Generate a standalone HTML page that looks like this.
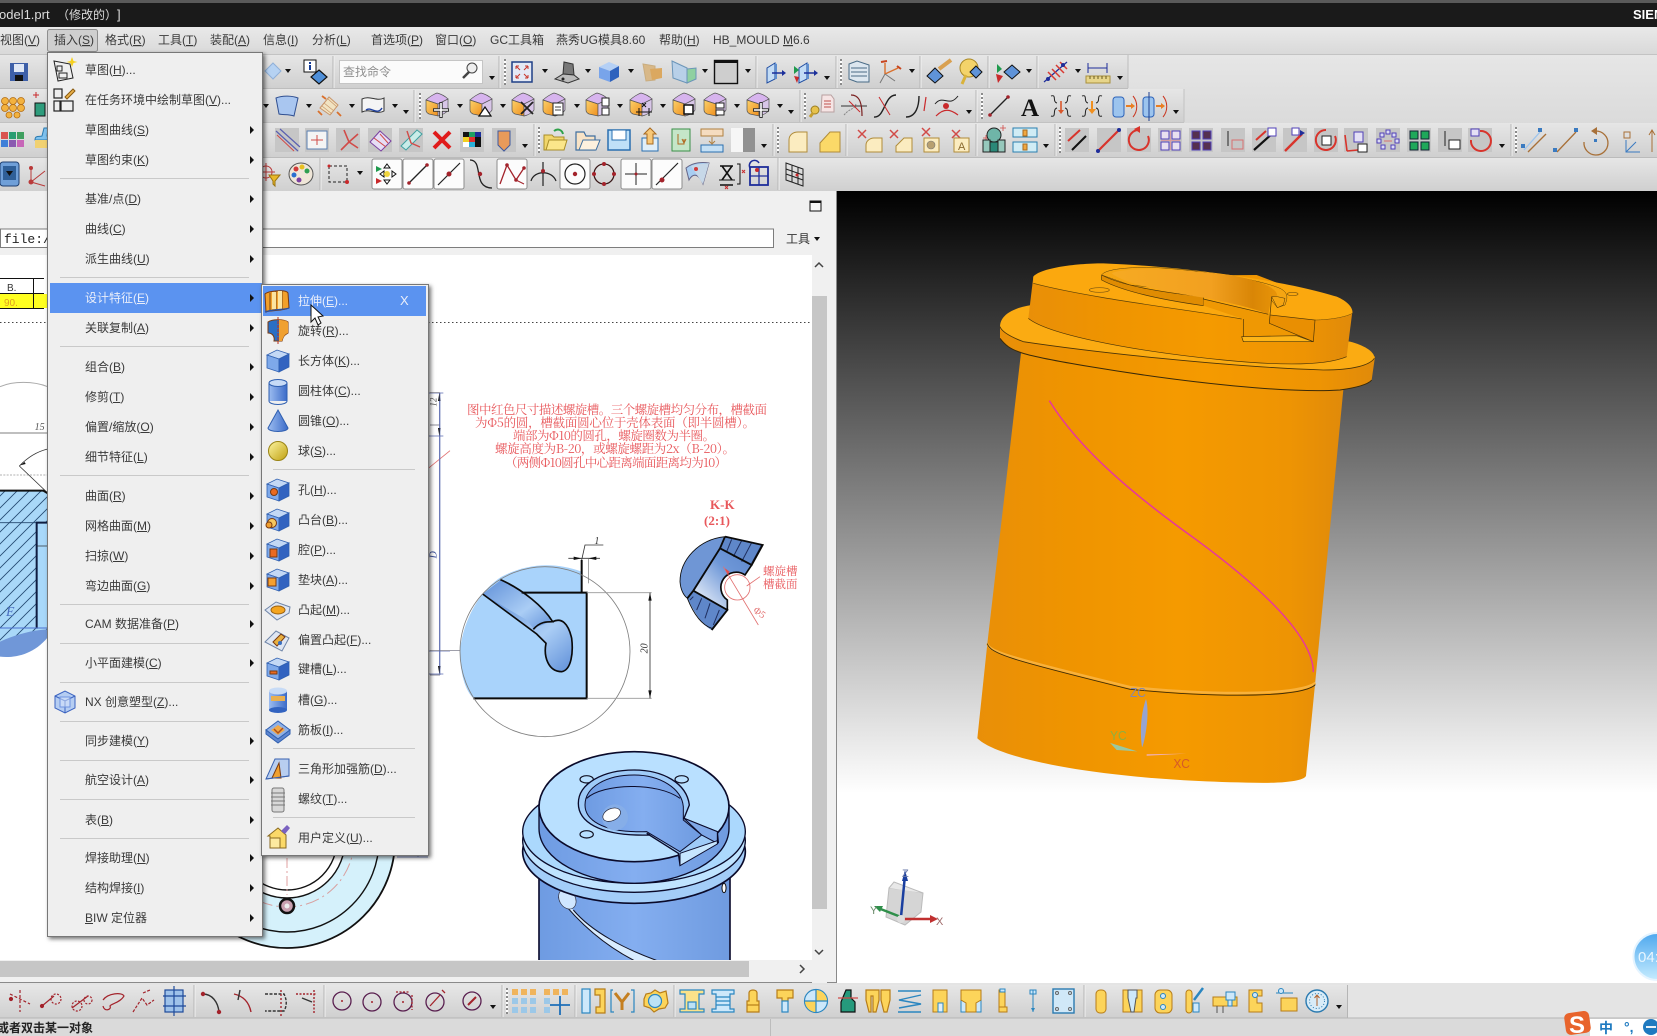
<!DOCTYPE html>
<html lang="zh"><head><meta charset="utf-8"><title>NX</title>
<style>
html,body{margin:0;padding:0;background:#ddd}
html{overflow:hidden}
body{width:1657px;height:1036px;position:relative;overflow:hidden;font-family:"Liberation Sans","Noto Sans CJK SC",sans-serif;font-size:12px;color:#3a3a3a;filter:blur(.3px)}
svg{position:absolute;left:0;top:0;display:block}
svg text{font-family:"Liberation Sans","Noto Sans CJK SC",sans-serif}
.m{position:absolute;background:#efefef;border:1px solid #777;box-shadow:2px 2px 4px rgba(0,0,0,.55);box-sizing:border-box}
.i{position:absolute;height:30px;line-height:30px;white-space:nowrap}
.s{position:absolute;height:1px;background:#c9c9c9}
.h{position:absolute;background:#5b93f0}
.r{position:absolute;width:0;height:0;border-left:4px solid #111;border-top:4px solid transparent;border-bottom:4px solid transparent}
.t{position:absolute;white-space:nowrap;line-height:16px}
</style></head><body>
<svg width="1657" height="1036" viewBox="0 0 1657 1036">
<defs>
<linearGradient id="tb" x1="0" y1="0" x2="0" y2="1"><stop offset="0" stop-color="#e6e6e6"/><stop offset="1" stop-color="#cfcfcf"/></linearGradient>
<linearGradient id="tb2" x1="0" y1="0" x2="0" y2="1"><stop offset="0" stop-color="#e9e9e9"/><stop offset="1" stop-color="#d8d8d8"/></linearGradient>
<linearGradient id="vp" x1="0" y1="0" x2="0" y2="1"><stop offset="0" stop-color="#000"/><stop offset=".76" stop-color="#fff"/><stop offset="1" stop-color="#fff"/></linearGradient>
<linearGradient id="org" x1="0" y1="0" x2="1" y2="0"><stop offset="0" stop-color="#e98f08"/><stop offset=".25" stop-color="#ef9400"/><stop offset=".55" stop-color="#f59a00"/><stop offset=".85" stop-color="#ee9403"/><stop offset="1" stop-color="#e08a0a"/></linearGradient>
<linearGradient id="hg" x1="0" y1="0" x2="1" y2="0"><stop offset="0" stop-color="#f6aa22"/><stop offset=".6" stop-color="#f2a020"/><stop offset=".85" stop-color="#d98606"/><stop offset="1" stop-color="#e89408"/></linearGradient>
<linearGradient id="bl" x1="0" y1="0" x2="1" y2="0"><stop offset="0" stop-color="#6e9be2"/><stop offset=".5" stop-color="#84aef0"/><stop offset="1" stop-color="#6f9be0"/></linearGradient>
<linearGradient id="blg" x1="0" y1="0" x2="1" y2="1"><stop offset="0" stop-color="#5f8fd8"/><stop offset=".6" stop-color="#aacdf5"/><stop offset="1" stop-color="#5f8fd8"/></linearGradient>
<linearGradient id="kk" x1="0" y1="1" x2="1" y2="0"><stop offset="0" stop-color="#fff"/><stop offset=".6" stop-color="#6f98d8"/><stop offset="1" stop-color="#5d87cc"/></linearGradient>
<linearGradient id="tm" x1="0" y1="0" x2="0" y2="1"><stop offset="0" stop-color="#4ea8ee"/><stop offset="1" stop-color="#c5ecff"/></linearGradient>
<linearGradient id="ocl" x1="0" y1="0" x2="1" y2="1"><stop offset="0" stop-color="#fbd16a"/><stop offset="1" stop-color="#ef8f1e"/></linearGradient>
<pattern id="ht" width="36" height="36" patternUnits="userSpaceOnUse"><rect width="36" height="36" fill="#a9d8f8"/><path d="M-2,38L38,-2M-2,2L2,-2M34,38L38,34" stroke="#244a72" stroke-width="2.500"/></pattern>
<clipPath id="docc"><rect x="0" y="255" width="812" height="705"/></clipPath>
<g id="a"><path d="M-3,-2h6l-3,4z" fill="#111"/></g>
<g id="gp"><path d="M0,-13V13" stroke="#fff" stroke-width="2.400"/><path d="M0,-13V13" stroke="#8a8a8a" stroke-width="2" stroke-dasharray="2 2"/></g>
<g id="sp"><path d="M0,-16V16" stroke="#b5b5b5"/><path d="M1,-16V16" stroke="#f2f2f2"/></g>
<g id="cb"><path d="M-10,-5L0,-10 10,-6 1,-1Z" fill="#b5d0f5"/><path d="M-10,-5L1,-1V10L-10,6Z" fill="#78a4ea"/><path d="M1,-1L10,-6V5L1,10Z" fill="#2e62bd"/></g>
<g id="oc"><path d="M-11,-5C-8,-8 -3,-11 0,-12 4,-11 8,-9 11,-6 8,-3 4,-2 1,-1Z" fill="#d7b4ee" stroke="#555" stroke-width=".7"/><path d="M-11,-5L1,-1V11L-8,9C-10,8 -11,7 -11,5Z" fill="url(#ocl)" stroke="#555" stroke-width=".7"/><path d="M1,-1L11,-6V5C10,7 6,10 1,11Z" fill="#d8c6e8" stroke="#555" stroke-width=".7"/></g>
<g id="bx"><rect x="-15" y="-15" width="30" height="30" rx="2" fill="#fcfcfc" stroke="#8d8d8d"/></g>
<g id="gb"><rect x="-12" y="-12" width="24" height="24" fill="#c6c6c6"/></g>
<g id="ln"><path d="M-9,9L9,-9" stroke="#222" stroke-width="1.300"/><circle cx="9" cy="-9" r="1.800" fill="#a3232b"/><circle cx="-9" cy="9" r="1.800" fill="#a3232b"/></g>
</defs>

<!-- shell -->
<rect width="1657" height="1036" fill="#dcdcdc"/>
<rect width="1657" height="3" fill="#5a5a5a"/>
<rect y="3" width="1657" height="24" fill="#1a1a1a"/>
<text x="-1" y="19" font-size="13" fill="#dcdcdc">odel1.prt</text>
<text x="57" y="19" font-size="12" fill="#dcdcdc">（修改的）</text>
<text x="117" y="19" font-size="13" fill="#dcdcdc">]</text>
<text x="1633" y="19" font-size="13" font-weight="700" fill="#fff">SIEMENS</text>
<rect y="27" width="1657" height="28" fill="url(#tb2)"/>
<path d="M0,54.500H1657" stroke="#c3c3c3"/>
<rect y="55" width="1657" height="136" fill="url(#tb)"/>
<rect y="55" x="0" width="1128" height="33" fill="url(#tb)"/>
<path d="M0,88.500H1128M1128,55V88" stroke="#bdbdbd" fill="none"/>
<rect y="89" x="0" width="1184" height="33" fill="url(#tb)"/>
<path d="M0,122.500H1184M1184,89V122" stroke="#c2c2c2" fill="none"/>
<rect y="123" width="1657" height="34" fill="url(#tb)"/>
<path d="M0,157.500H1657" stroke="#bbb"/>
<rect y="158" width="1657" height="33" fill="url(#tb)"/>

<!-- menubar text -->
<g font-size="12" fill="#3a3a3a">
<rect x="47.500" y="29.500" width="50" height="22" fill="#cfcfcf" stroke="#8f8f8f" rx="2"/>
<text x="0" y="44">视图(<tspan text-decoration="underline">V</tspan>)</text>
<text x="54" y="44">插入(<tspan text-decoration="underline">S</tspan>)</text>
<text x="105" y="44">格式(<tspan text-decoration="underline">R</tspan>)</text>
<text x="158" y="44">工具(<tspan text-decoration="underline">T</tspan>)</text>
<text x="210" y="44">装配(<tspan text-decoration="underline">A</tspan>)</text>
<text x="263" y="44">信息(<tspan text-decoration="underline">I</tspan>)</text>
<text x="312" y="44">分析(<tspan text-decoration="underline">L</tspan>)</text>
<text x="371" y="44">首选项(<tspan text-decoration="underline">P</tspan>)</text>
<text x="435" y="44">窗口(<tspan text-decoration="underline">O</tspan>)</text>
<text x="490" y="44">GC工具箱</text>
<text x="556" y="44">燕秀UG模具8.60</text>
<text x="659" y="44">帮助(<tspan text-decoration="underline">H</tspan>)</text>
<text x="713" y="44">HB_MOULD <tspan text-decoration="underline">M</tspan>6.6</text>
</g>

<!-- ROW 1 -->
<g>
<g transform="translate(19,72)"><rect x="-9" y="-9" width="18" height="18" fill="#3d5fa8"/><rect x="-5" y="-8" width="10" height="8" fill="#dfe7f5"/><rect x="-4" y="3" width="8" height="6" fill="#111"/></g>
<g transform="translate(270,71)"><path d="M3,-8L11,0 3,8 -5,0Z" fill="#b6d2f2" stroke="#8fb0d8"/></g>
<use href="#a" x="288" y="71"/>
<g transform="translate(314,71)"><rect x="-10" y="-11" width="12" height="12" fill="#fff" stroke="#111"/><rect x="-5" y="-9" width="2" height="2" fill="#123a96"/><rect x="-5" y="-6" width="2" height="5" fill="#123a96"/><path d="M5,-1L13,6 5,13 -3,6Z" fill="#4f8fd8" stroke="#111" stroke-width="1.200"/></g>
<use href="#sp" x="333" y="72"/>
<rect x="339.500" y="60.500" width="143" height="23" fill="#fbfbfb" stroke="#c5c5c5"/>
<text x="343" y="76" font-size="12" fill="#8f8f8f">查找命令</text>
<g transform="translate(470,71)" fill="none" stroke="#444"><circle cx="2" cy="-3" r="5" fill="#eee"/><path d="M-1,1L-7,7" stroke-width="2.500"/></g>
<use href="#a" x="492" y="78"/><use href="#sp" x="499" y="72"/><use href="#gp" x="505" y="72"/>
<g transform="translate(522,72)"><rect x="-10" y="-10" width="20" height="20" fill="#e4e9f5" stroke="#1f3f86" stroke-width="1.500"/><path d="M-6,-6L-2,-2M-6,-6h3M-6,-6v3M6,-6L2,-2M6,-6h-3M6,-6v3M-6,6L-2,2M-6,6h3M-6,6v-3M6,6L2,2M6,6h-3M6,6v-3" stroke="#c9352b" fill="none"/></g>
<use href="#a" x="545" y="71"/>
<g transform="translate(566,72)"><path d="M-2,-10L7,-8 8,3 -3,2Z" fill="#777" stroke="#333"/><path d="M-3,2L8,3 13,7 2,11 -11,7Z" fill="#bbb" stroke="#333"/><circle cx="-3" cy="7" r="1.500" fill="#222"/></g>
<use href="#a" x="588" y="71"/><use href="#cb" x="609" y="72"/><use href="#a" x="631" y="71"/>
<g transform="translate(652,72)"><path d="M-9,-8L3,-6V8L-6,9Z" fill="#d8b888" stroke="#c9ad80"/><path d="M-2,-3L10,-4V6L0,8Z" fill="#dba860"/></g>
<g transform="translate(683,72)"><path d="M-11,-11L4,-4V11L-10,6Z" fill="#b8d0e8" stroke="#6b95b8"/><path d="M4,-3L13,-4V7L4,11Z" fill="#8fd0a0" stroke="#6b95b8"/></g>
<use href="#a" x="705" y="71"/>
<g transform="translate(726,72)"><rect x="-11.500" y="-11.500" width="23" height="23" fill="#cecece" stroke="#111" stroke-width="1.400"/><rect x="-12" y="-12" width="24" height="3" fill="#111"/></g>
<use href="#a" x="748" y="71"/><use href="#sp" x="756" y="72"/>
<g transform="translate(774,73)"><path d="M-7,-5L1,-10V6L-7,10Z" fill="#c3dcf5" stroke="#1e4ba0"/><path d="M1,-10L3,-9V6L1,6Z" fill="#5f8fd0"/><path d="M-2,0H8" stroke="#1b2f9a" stroke-width="1.500"/><path d="M8,-3L12,0 8,3Z" fill="#1b2f9a"/></g>
<g transform="translate(806,73)"><path d="M-7,-5L1,-10V6L-7,10Z" fill="#c3dcf5" stroke="#1e4ba0"/><path d="M1,-10L3,-9V6L1,6Z" fill="#5f8fd0"/><path d="M-2,0H8" stroke="#1b2f9a" stroke-width="1.500"/><path d="M8,-3L12,0 8,3Z" fill="#1b2f9a"/><path d="M-12,-7L-7,-3 -12,1Z" fill="#1f9a4d"/><path d="M-12,3L-7,4 -9,10Z" fill="#c9292b"/></g>
<use href="#a" x="827" y="78"/><use href="#sp" x="836" y="72"/><use href="#gp" x="841" y="72"/>
<g transform="translate(859,72)" fill="#dce6ef" stroke="#4a6b86"><path d="M-10,-8L-2,-11 10,-7V10L-2,10 -10,7Z"/><path d="M-8,-4H8M-8,0H8M-8,4H8" fill="none"/></g>
<g transform="translate(889,72)" fill="none"><path d="M-4,2L9,-4M-4,2V-9" stroke="#d9702c" stroke-width="1.400"/><path d="M-4,2L-9,11 M-4,2L6,9" stroke="#777"/><path d="M-8,-10L-2,-11M8,-6L12,-3" stroke="#c8441e" stroke-width="2"/></g>
<use href="#a" x="912" y="71"/><use href="#sp" x="920" y="72"/>
<g transform="translate(939,72)"><path d="M-4,2L4,10 -4,17 -12,10Z" transform="translate(0,-6)" fill="#5f93d8" stroke="#111"/><path d="M0,-3L12,-12" stroke="#d9a050" stroke-width="4"/></g>
<g transform="translate(970,72)"><circle cx="-1" cy="-4" r="9" fill="#f3d36a" stroke="#a98825"/><path d="M-4,3L-8,12" stroke="#d9b23a" stroke-width="3"/><path d="M6,-6L12,0 6,6 0,0Z" fill="#5f93d8" stroke="#111"/></g>
<use href="#sp" x="988" y="72"/>
<g transform="translate(1006,72)"><path d="M-9,-8L-4,-3 -9,1Z" fill="#1f9a4d"/><path d="M-10,2L-3,4 -8,11Z" fill="#c9292b"/><path d="M6,-7L14,0 6,7 -2,0Z" fill="#5f93d8" stroke="#111"/></g>
<use href="#a" x="1029" y="71"/><use href="#sp" x="1037" y="72"/>
<g transform="translate(1056,72)"><path d="M-12,10L11,-10" stroke="#1e2d9a" stroke-width="1.200"/><path d="M-8,0L0,8M-4,-3L4,5M0,-7L8,1M4,-10L11,-3" stroke="#d93a32" stroke-width="1.500"/><circle cx="-8" cy="7" r="2" fill="#1e2d9a"/><circle cx="7" cy="-7" r="2" fill="#1e2d9a"/></g>
<use href="#a" x="1078" y="71"/>
<g transform="translate(1098,72)"><path d="M-10,-4H9M-10,-9V1M9,-9V1" stroke="#1e2d9a"/><rect x="-12" y="4" width="24" height="7" fill="#e7d58a" stroke="#a8903c"/><path d="M-8,4v3M-4,4v3M0,4v3M4,4v3M8,4v3" stroke="#6a5a20"/></g>
<use href="#a" x="1120" y="78"/>
</g>

<!-- ROW 2 -->
<g>
<g transform="translate(13,106)" fill="#f3b23f" stroke="#b36d14" stroke-width=".8"><circle cx="-8" cy="-5" r="3.500"/><circle cx="0" cy="-5" r="3.500"/><circle cx="8" cy="-5" r="3.500"/><circle cx="-8" cy="2" r="3.500"/><circle cx="0" cy="2" r="3.500"/><circle cx="8" cy="2" r="3.500"/><circle cx="-4" cy="9" r="3"/><circle cx="4" cy="9" r="3"/></g>
<g transform="translate(41,106)"><path d="M-6,10V-3H4V10Z" fill="#2e9c7c" stroke="#111"/><path d="M-8,-11H-2M-5,-14V-8" stroke="#c9292b"/></g>
<use href="#a" x="266" y="106"/>
<g transform="translate(287,106)"><path d="M-11,-8C-4,-11 6,-10 11,-8L7,10C2,8 -4,9 -8,8Z" fill="#a9c6f0" stroke="#304f90"/></g>
<use href="#a" x="309" y="106"/>
<g transform="translate(329,106)"><path d="M-9,2L0,-9 9,-1 1,9Z" fill="#f1e3c2" stroke="#c8956a" stroke-width="1"/><path d="M-5,-3L5,5M-1,-7L8,1M-7,0L3,8" stroke="#c8956a" stroke-width=".7"/><path d="M-7,-10L-3,-7M8,6L12,10M-11,5L-7,9" stroke="#d9702c" stroke-width="1.800"/></g>
<use href="#a" x="352" y="106"/>
<g transform="translate(373,106)"><path d="M-11,-7C-3,-11 4,-4 11,-8V5C4,9 -3,2 -11,6Z" fill="#f5f5f5" stroke="#333"/><path d="M-7,4C-2,0 4,10 9,2" stroke="#1e3fa0" fill="none" stroke-width="1.400"/></g>
<use href="#a" x="395" y="106"/><use href="#a" x="406" y="112"/>
<use href="#sp" x="414" y="106"/><use href="#gp" x="420" y="106"/>
<use href="#oc" x="437" y="105"/><g transform="translate(441,110)"><path d="M0,-8V8M-8,0H8" stroke="#333" stroke-width="3.400"/><path d="M0,-7V7M-7,0H7" stroke="#fff" stroke-width="1.600"/></g>
<use href="#a" x="460" y="106"/>
<use href="#oc" x="481" y="105"/><path d="M485,107l6,9h-12z" fill="#fff" stroke="#111" stroke-width="1.200"/>
<use href="#a" x="503" y="106"/>
<use href="#oc" x="523" y="105"/><path d="M521,102l12,12M533,102l-12,12" stroke="#222" stroke-width="1.800"/>
<use href="#oc" x="554" y="105"/><rect x="553" y="103" width="10" height="12" fill="#fff" stroke="#222"/><path d="M555,107h6M555,110h6" stroke="#444"/>
<use href="#a" x="577" y="106"/>
<use href="#oc" x="597" y="105"/><rect x="602" y="98" width="7" height="8" fill="#fff" stroke="#222"/><rect x="602" y="108" width="7" height="7" fill="#fff" stroke="#222"/>
<use href="#a" x="620" y="106"/>
<use href="#oc" x="641" y="105"/><path d="M636,112h16M639,108v8M649,108v8" stroke="#111"/><path d="M642,103l4,4m0-4l-4,4" stroke="#111"/>
<use href="#a" x="663" y="106"/>
<use href="#oc" x="684" y="105"/><rect x="684" y="105" width="9" height="9" fill="#fff" stroke="#111" stroke-width="1.500"/>
<use href="#oc" x="715" y="105"/><rect x="716" y="103" width="8" height="5" fill="#fff" stroke="#222"/><rect x="716" y="110" width="8" height="5" fill="#fff" stroke="#222"/>
<use href="#a" x="737" y="106"/>
<use href="#oc" x="758" y="105"/><g transform="translate(761,110)"><path d="M0,-8V8M-8,0H8" stroke="#333" stroke-width="3.400"/><path d="M0,-7V7M-7,0H7" stroke="#fff" stroke-width="1.600"/></g>
<use href="#a" x="780" y="106"/><use href="#a" x="791" y="112"/>
<use href="#sp" x="800" y="106"/><use href="#gp" x="805" y="106"/>
<g transform="translate(822,106)"><path d="M0,-11H9L12,-7V6H-1Z" fill="#f6e4e4" stroke="#b8a0a0"/><path d="M2,-5H9M2,-2H9M2,1H9" stroke="#c0504d"/><circle cx="-7" cy="4" r="4" fill="#e7c24b" stroke="#9a7d22"/><path d="M-9,7L-12,11" stroke="#c69f2e" stroke-width="3"/></g>
<g transform="translate(854,106)" fill="none"><path d="M-13,0H13" stroke="#333"/><path d="M-3,-11C4,-11 8,-6 8,10" stroke="#7a1f1f" stroke-width="1.200"/><path d="M-10,9C-4,2 0,4 2,-2" stroke="#888" stroke-dasharray="2 1"/><path d="M-5,-5L6,6" stroke="#c9292b"/></g>
<g transform="translate(885,106)" fill="none"><path d="M-11,11C0,12 -1,-11 11,-11" stroke="#222" stroke-width="1.400"/><path d="M-6,-9L5,9" stroke="#c9292b"/></g>
<g transform="translate(917,106)" fill="none"><path d="M-11,11C-1,11 2,0 2,-10" stroke="#222" stroke-width="1.400"/><path d="M9,-9L7,5" stroke="#c9292b" stroke-width="1.200"/></g>
<g transform="translate(947,106)" fill="none"><path d="M-12,-2C-4,-12 2,2 11,-10" stroke="#222"/><path d="M-11,10C-3,2 3,3 11,9" stroke="#c9292b" stroke-width="1.200"/><circle cx="-1" cy="0" r="3" fill="#c9292b"/></g>
<use href="#a" x="969" y="112"/><use href="#sp" x="976" y="106"/><use href="#gp" x="982" y="106"/>
<use href="#ln" x="999" y="106"/>
<text x="1021" y="116" font-weight="700" font-size="25" fill="#111" style="font-family:'Liberation Serif'">A</text>
<g transform="translate(1061,106)" fill="none"><path d="M-10,-10C-4,-12 -9,-4 -4,-3M-10,10C-4,12 -9,3 -4,2M10,-10C4,-12 9,-4 4,-3M10,10C4,12 9,3 4,2" stroke="#222"/><path d="M0,-5V6" stroke="#d9572b" stroke-width="1.600"/><path d="M-3,4L0,8 3,4Z" fill="#d9572b"/></g>
<g transform="translate(1092,106)" fill="none"><path d="M-10,-10C-4,-12 -9,-4 -4,-3M-10,10C-4,12 -9,3 -4,2M10,-10C4,-12 9,-4 4,-3M10,10C4,12 9,3 4,2" stroke="#222"/><path d="M0,-5V4" stroke="#f09020" stroke-width="2"/><path d="M-4,3L0,8 4,3Z" fill="#f09020"/></g>
<g transform="translate(1123,106)"><rect x="-10" y="-9" width="11" height="20" rx="3" fill="#9cc4ee" stroke="#2c62b8"/><path d="M3,0H9" stroke="#ea7d21" stroke-width="2"/><path d="M8,-3L12,0 8,3Z" fill="#ea7d21"/><path d="M10,-10C15,-4 15,5 10,11" stroke="#c9351e" fill="none"/></g>
<g transform="translate(1153,106)"><rect x="-10" y="-9" width="11" height="20" rx="3" fill="#9cc4ee" stroke="#2c62b8"/><path d="M-4,-14V15" stroke="#1e3f90"/><path d="M3,0H9" stroke="#ea7d21" stroke-width="2"/><path d="M8,-3L12,0 8,3Z" fill="#ea7d21"/><path d="M10,-10C15,-4 15,5 10,11" stroke="#c9351e" fill="none"/></g>
<use href="#a" x="1176" y="112"/>
</g>

<!-- ROW 3 -->
<g>
<g transform="translate(13,140)"><rect x="-12" y="-8" width="7" height="7" fill="#d9534f"/><rect x="-4" y="-8" width="7" height="7" fill="#2a9d72"/><rect x="4" y="-8" width="7" height="7" fill="#3f9f5f"/><rect x="-12" y="0" width="7" height="7" fill="#3f7fd8"/><rect x="-4" y="0" width="7" height="7" fill="#8a5ab0"/><rect x="4" y="0" width="7" height="7" fill="#c766b8"/></g>
<g transform="translate(43,140)"><path d="M-8,0C-8,-5 -4,-3 -1,-4L1,-12H5L4,-4C7,-3 9,-3 9,0Z" fill="#7fc2ee" stroke="#2a7ab0"/><rect x="-8" y="0" width="16" height="8" fill="#f1d172"/></g>
<use href="#gb" x="287" y="140"/><path d="M276,131L298,151M280,129L300,147" stroke="#5a5fb0" stroke-width="1.200"/><path d="M277,135L294,151" stroke="#d14b48"/>
<use href="#gb" x="317" y="140"/><rect x="307" y="131" width="20" height="18" fill="#f4f4f4" stroke="#5a7fb0"/><path d="M317,135v10M311,140h12" stroke="#d14b48"/>
<use href="#gb" x="348" y="140"/><path d="M344,130L349,142 358,134M349,142L341,150M349,142L358,148" stroke="#d14b48" stroke-width="1.600" fill="none"/>
<use href="#gb" x="380" y="140"/><path d="M370,142L380,131 391,141 381,151Z" fill="#e6ddf5" stroke="#7a3fa0"/><path d="M374,138L386,147M380,134L388,143" stroke="#d14b48"/>
<use href="#gb" x="411" y="140"/><path d="M401,146L417,130 422,134 406,150Z" fill="#c9ece8" stroke="#3fa0a0"/><path d="M407,131L411,143 420,147" stroke="#d14b48" fill="none" stroke-width="1.400"/>
<path d="M434,132L450,148M450,132L434,148" stroke="#e01b1b" stroke-width="4"/>
<use href="#gb" x="472" y="140"/><g transform="translate(463,132)"><rect width="6" height="5" fill="#111"/><rect x="6" width="6" height="5" fill="#1fa060"/><rect x="12" width="6" height="5" fill="#1b2f9a"/><rect y="5" width="6" height="5" fill="#f0d020"/><rect x="6" y="5" width="6" height="5" fill="#e03030"/><rect x="12" y="5" width="6" height="5" fill="#111"/><rect y="10" width="6" height="5" fill="#fff"/><rect x="6" y="10" width="6" height="5" fill="#2ab0d8"/><rect x="12" y="10" width="6" height="5" fill="#111"/></g>
<use href="#gb" x="504" y="140"/><path d="M498,131H510V145L504,151 498,145Z" fill="#e89a5a" stroke="#3f5aa0"/>
<use href="#a" x="525" y="146"/><use href="#sp" x="534" y="140"/><use href="#gp" x="539" y="140"/>
<g transform="translate(554,140)"><path d="M-10,-5H-2L0,-3H10V10H-10Z" fill="#f1d66b" stroke="#a98d28"/><path d="M-8,10L-5,0H13L10,10Z" fill="#fbe68a" stroke="#a98d28"/><path d="M0,-9C4,-12 8,-10 9,-6" stroke="#2fa14a" stroke-width="2" fill="none"/></g>
<g transform="translate(587,140)"><path d="M-11,-8H-3L-1,-4H8V10H-11Z" fill="#f8e3c6" stroke="#3f6fa0" stroke-width="1.200"/><path d="M-8,10L-4,0H13L9,10Z" fill="#fdf1de" stroke="#3f6fa0"/></g>
<g transform="translate(619,140)"><rect x="-11" y="-10" width="22" height="20" fill="#bfe0f8" stroke="#2a6fb0" stroke-width="1.500"/><rect x="-7" y="-10" width="14" height="10" fill="#fff" stroke="#2a6fb0"/></g>
<g transform="translate(650,140)"><path d="M-8,-2H8V11H-8Z" fill="#e0eef8" stroke="#2a6fb0"/><path d="M-3,4V-6H-6L0,-12 6,-6H3V4Z" fill="#f8c878" stroke="#a86a20"/></g>
<g transform="translate(681,140)"><rect x="-9" y="-11" width="18" height="22" fill="#c5e6c8" stroke="#3a8f48"/><path d="M-3,-6V4H3V-1" stroke="#b06a20" fill="none"/><path d="M1,-1L3,3 5,-1" stroke="#b06a20" fill="none"/></g>
<g transform="translate(712,140)"><rect x="-11" y="-11" width="22" height="7" fill="#f5dcc0" stroke="#b08040"/><rect x="-11" y="5" width="22" height="7" fill="#c5e0f5" stroke="#2a6fb0"/><path d="M0,-3V3M-3,1L0,4 3,1" stroke="#b08040" fill="none"/></g>
<rect x="731" y="128" width="12" height="24" fill="#f6f6f6"/><rect x="743" y="128" width="12" height="24" fill="#919191"/>
<use href="#a" x="764" y="146"/><use href="#sp" x="773" y="140"/><use href="#gp" x="778" y="140"/>
<path d="M789,152V140C789,135 793,132 798,132H807V152Z" fill="#fbecc0" stroke="#b08c3a"/>
<path d="M820,152V143L830,132H840V152Z" fill="#fbd968" stroke="#b08c3a"/>
<use href="#sp" x="846" y="140"/>
<g stroke-width="1.500"><path d="M858,130L866,138M866,130L858,138" stroke="#d14b48"/><path d="M866,152V145C866,141 870,138 874,138H882V152Z" fill="#fbecc0" stroke="#b08c3a" stroke-width="1"/>
<path d="M890,130L898,138M898,130L890,138" stroke="#d14b48"/><path d="M896,152V146L904,138H912V152Z" fill="#fbecc0" stroke="#b08c3a" stroke-width="1"/>
<path d="M922,128L930,136M930,128L922,136" stroke="#d14b48"/><rect x="924" y="138" width="15" height="14" fill="#fbecc0" stroke="#b08c3a" stroke-width="1"/><circle cx="931" cy="145" r="4" fill="#b8a070" stroke="#777" stroke-width=".6"/>
<path d="M952,130L960,138M960,130L952,138" stroke="#d14b48"/><rect x="954" y="138" width="15" height="14" fill="#fbecc0" stroke="#b08c3a" stroke-width="1"/></g>
<text x="958" y="150" font-size="11" fill="#8a6a30">A</text>
<use href="#sp" x="976" y="140"/>
<g transform="translate(994,140)"><path d="M-11,-2h6M-8,-5v6M6,-12h6M9,-15v6" stroke="#d14b48" stroke-width=".8"/><circle cx="0" cy="-5" r="7" fill="#6fb5a8" stroke="#222"/><rect x="-11" y="0" width="7" height="12" fill="#96c8bc" stroke="#222"/><rect x="4" y="0" width="7" height="12" fill="#96c8bc" stroke="#222"/><rect x="-4" y="2" width="8" height="10" fill="#2a8878" stroke="#222"/></g>
<g transform="translate(1025,140)"><rect x="-12" y="-12" width="24" height="9" fill="#d0ecf5" stroke="#2a7fb0"/><rect x="-12" y="2" width="24" height="10" fill="#d0ecf5" stroke="#2a7fb0"/><rect x="-2" y="-10" width="4" height="6" fill="#f0a840" stroke="#a86a20"/><rect x="-2" y="4" width="4" height="6" fill="#f0a840" stroke="#a86a20"/></g>
<use href="#a" x="1046" y="146"/><use href="#sp" x="1055" y="140"/><use href="#gp" x="1060" y="140"/>
<use href="#gb" x="1077" y="140"/><path d="M1068,141L1080,130" stroke="#d8342c" stroke-width="2"/><path d="M1072,150L1086,136" stroke="#111" stroke-width="2"/>
<use href="#gb" x="1109" y="140"/><path d="M1098,151L1118,131" stroke="#d8342c" stroke-width="2.200"/><circle cx="1119" cy="130" r="2" fill="#1e2d9a"/><circle cx="1098" cy="151" r="2" fill="#1e2d9a"/>
<use href="#gb" x="1139" y="140"/><path d="M1139,130A10,10 0 1 0 1148,136" fill="none" stroke="#d8342c" stroke-width="2"/><path d="M1134,129L1140,126V133Z" fill="#d8342c"/>
<use href="#gb" x="1170" y="140"/><g fill="#e8e0f0" stroke="#5040b8"><rect x="1161" y="131" width="8" height="8"/><rect x="1172" y="131" width="8" height="8"/><rect x="1161" y="142" width="8" height="8"/><rect x="1172" y="142" width="8" height="8"/></g><path d="M1161,140.500h19M1170.500,131v19" stroke="#d8a0a0"/>
<use href="#gb" x="1201" y="140"/><g fill="#55304f" stroke="#5040b8"><rect x="1192" y="131" width="8" height="8"/><rect x="1203" y="131" width="8" height="8"/><rect x="1192" y="142" width="8" height="8"/><rect x="1203" y="142" width="8" height="8"/></g>
<use href="#gb" x="1233" y="140"/><path d="M1228,131V146" stroke="#222"/><rect x="1232" y="140" width="11" height="9" fill="none" stroke="#d87070"/>
<use href="#gb" x="1264" y="140"/><path d="M1254,150L1274,132" stroke="#111" stroke-width="2.200"/><path d="M1256,140L1266,131" stroke="#d8342c" stroke-width="2"/><rect x="1268" y="128" width="8" height="8" fill="#fff" stroke="#5040b8"/>
<use href="#gb" x="1295" y="140"/><path d="M1285,151L1302,134" stroke="#d8342c" stroke-width="2.400"/><rect x="1292" y="128" width="7" height="7" fill="#fff" stroke="#5040b8"/><path d="M1300,130l5,3-5,3z" fill="#1e2d9a"/>
<use href="#gb" x="1326" y="140"/><path d="M1326,130A10,10 0 1 0 1335,136" fill="none" stroke="#d8342c" stroke-width="2"/><rect x="1322" y="136" width="9" height="9" fill="#fff" stroke="#222"/>
<use href="#gb" x="1356" y="140"/><path d="M1347,151L1345,135M1347,151L1358,150" stroke="#d8342c" stroke-width="1.600" fill="none"/><rect x="1354" y="132" width="9" height="10" fill="#e4e0f5" stroke="#5040b8"/><rect x="1358" y="144" width="9" height="8" fill="#fff" stroke="#222"/>
<use href="#gb" x="1388" y="140"/><g fill="#dcdcf5" stroke="#5040b8"><rect x="1386" y="130" width="4" height="4"/><rect x="1380" y="133" width="4" height="4"/><rect x="1392" y="133" width="4" height="4"/><rect x="1377" y="139" width="4" height="4"/><rect x="1395" y="139" width="4" height="4"/><rect x="1381" y="145" width="4" height="4"/><rect x="1391" y="145" width="4" height="4"/></g><path d="M1384,141h8" stroke="#d87070"/>
<use href="#gb" x="1419" y="140"/><g fill="#1fa85a" stroke="#123"><rect x="1410" y="131" width="8" height="8"/><rect x="1421" y="131" width="8" height="8"/><rect x="1410" y="142" width="8" height="8"/><rect x="1421" y="142" width="8" height="8"/></g>
<use href="#gb" x="1450" y="140"/><path d="M1445,131V146" stroke="#222"/><rect x="1449" y="140" width="11" height="9" fill="#fff" stroke="#222"/>
<use href="#gb" x="1480" y="140"/><path d="M1480,131A10,10 0 1 1 1471,140" fill="none" stroke="#d8342c" stroke-width="2"/><rect x="1471" y="129" width="8" height="7" fill="#e4e0f5" stroke="#5040b8"/>
<use href="#a" x="1502" y="146"/><use href="#sp" x="1511" y="140"/><use href="#gp" x="1516" y="140"/>
<path d="M1524,150L1540,132" stroke="#9cc4ee" stroke-width="1.300"/><path d="M1528,152L1546,134" stroke="#a87038" stroke-width="1.300"/><rect x="1521" y="144" width="4" height="4" fill="#3a7ac0"/><rect x="1538" y="128" width="4" height="4" fill="#3a7ac0"/>
<path d="M1557,152L1576,132" stroke="#a87038" stroke-width="1.300"/><rect x="1553" y="148" width="4" height="4" fill="#3a7ac0"/><rect x="1574" y="128" width="4" height="4" fill="#3a7ac0"/>
<path d="M1596,131A12,12 0 1 1 1584,142" fill="none" stroke="#a87038" stroke-width="1.300"/><path d="M1591,131L1597,127V135Z" fill="#a87038"/><rect x="1594" y="139" width="3" height="3" fill="#3a7ac0"/>
<path d="M1626,140V152H1640M1626,152L1636,142" stroke="#3a7ac0" fill="none"/><rect x="1624" y="132" width="6" height="6" fill="none" stroke="#a87038"/><path d="M1652,152V131M1649,135L1652,130 1655,135" stroke="#a87038" fill="none"/>
</g>

<!-- ROW 4 -->
<g>
<g transform="translate(10,174)"><rect x="-10" y="-12" width="19" height="24" rx="3" fill="#6f9fd8" stroke="#1f3f70"/><rect x="-7" y="-8" width="13" height="14" fill="#2f5f98"/><path d="M-4,-3h7l-3.500,5z" fill="#111"/></g>
<g transform="translate(37,174)" fill="none" stroke="#b93a3a"><path d="M-6,-5V8L8,-3M-6,8L8,12"/><circle cx="-6" cy="-6" r="1.500" fill="#b93a3a"/><circle cx="-6" cy="8" r="2" fill="#b93a3a"/></g>
<g transform="translate(266,172)"><circle r="6" fill="none" stroke="#b93a3a"/><path d="M-9,0H9M0,-9V9" stroke="#b93a3a"/><path d="M3,3H14L9,9V14L7,12V9Z" fill="#e8b828" stroke="#9a7410"/></g>
<g transform="translate(301,174)"><ellipse rx="12" ry="11" fill="#efe6d8" stroke="#555"/><circle cx="-5" cy="-5" r="2.500" fill="#d03a3a"/><circle cx="1" cy="-7" r="2.500" fill="#e8c020"/><circle cx="6" cy="-3" r="2.500" fill="#2f9f50"/><circle cx="-7" cy="1" r="2.500" fill="#2a6fd0"/><circle cx="-2" cy="6" r="2.500" fill="#7a3fa0"/></g>
<use href="#sp" x="320" y="174"/>
<rect x="329" y="166" width="18" height="16" fill="none" stroke="#222" stroke-dasharray="3 2"/><circle cx="329" cy="166" r="1.500" fill="#c9292b"/><circle cx="347" cy="182" r="2" fill="#c9292b"/>
<use href="#a" x="360" y="173"/>
<use href="#bx" x="387" y="174"/><g transform="translate(387,174)"><path d="M-9,-3L-3,0 -9,3Z" transform="translate(-2,-5)" fill="#1f9a4d"/><path d="M-9,-3L-3,0 -9,3Z" transform="translate(-2,7)" fill="#c9292b"/><path d="M0,-10L3,-6H-3ZM0,10L3,6H-3ZM-7,0L-3,-3V3ZM9,0L5,-3V3Z" fill="#fff" stroke="#111"/><circle r="3" fill="#f1d640"/></g>
<use href="#bx" x="418" y="174"/><use href="#ln" x="418" y="174"/>
<use href="#bx" x="449" y="174"/><path d="M438,185L460,163" stroke="#222" stroke-width="1.200"/><circle cx="449" cy="174" r="2.500" fill="#a3232b"/>
<path d="M470,160C484,160 472,188 492,188" fill="none" stroke="#222" stroke-width="1.300"/><circle cx="480" cy="174" r="2.200" fill="#a3232b"/>
<use href="#bx" x="512" y="174"/><path d="M500,184L507,165 516,180 524,168" fill="none" stroke="#a3232b" stroke-width="1.300"/><path d="M516,180L524,184" stroke="#a3232b"/><circle cx="507" cy="165" r="1.800" fill="#a3232b"/><circle cx="516" cy="180" r="1.800" fill="#a3232b"/><circle cx="524" cy="168" r="1.800" fill="#a3232b"/>
<path d="M531,181C534,170 552,170 556,181M543,162V186" fill="none" stroke="#222" stroke-width="1.200"/><circle cx="543" cy="171" r="2" fill="#a3232b"/>
<use href="#bx" x="575" y="174"/><circle cx="575" cy="174" r="10" fill="none" stroke="#222" stroke-width="1.200"/><circle cx="575" cy="174" r="2.200" fill="#a3232b"/>
<circle cx="604" cy="174" r="10" fill="none" stroke="#3a1a1a" stroke-width="1.300"/><g fill="#a3232b"><circle cx="604" cy="164" r="2"/><circle cx="604" cy="184" r="2"/><circle cx="594" cy="174" r="2"/><circle cx="614" cy="174" r="2"/></g>
<use href="#bx" x="636" y="174"/><path d="M636,163V185M625,174H647" stroke="#222"/><circle cx="636" cy="174" r="1.500" fill="#a3232b"/>
<use href="#bx" x="667" y="174"/><path d="M656,185L678,163" stroke="#222" stroke-width="1.200"/><circle cx="662" cy="180" r="2.500" fill="#a3232b"/>
<g transform="translate(697,174)"><path d="M-11,-6C-4,-12 6,-12 12,-11L6,10C3,2 -3,-3 -8,6Z" fill="#a8cdf2" stroke="#668"/><path d="M-6,-8C0,-10 6,-10 12,-11L6,10Z" fill="#c7d8e8"/><circle cx="-1" cy="-5" r="2" fill="#d03a3a"/></g>
<g transform="translate(727,174)" fill="none"><path d="M-7,-8H6M-7,11H6M-5,-8L5,6M5,-8L-5,6" stroke="#111" stroke-width="1.600"/><path d="M-8,6H8" stroke="#111"/><path d="M10,-10H13V10H10" stroke="#111"/><path d="M15,-4l3,3m0-3l-3,3M-2,12l3,3m0-3l-3,3" stroke="#c9292b"/></g>
<g transform="translate(759,174)"><rect x="-9" y="-7" width="18" height="18" fill="none" stroke="#1e2d9a" stroke-width="1.800"/><path d="M0,-7V11M-9,2H9" stroke="#1e2d9a" stroke-width="1.300"/><path d="M-9,-6A5,5 0 0 1 0,-11" fill="none" stroke="#1e2d9a" stroke-width="1.500"/><circle cx="-2" cy="-4" r="2" fill="#c9292b"/></g>
<use href="#sp" x="778" y="174"/>
<g transform="translate(795,174)" fill="none" stroke="#222"><path d="M-9,-11L8,-5V12L-9,6ZM-9,-5L8,1M-9,0L8,6M-3,-9V8M3,-7V10"/><circle cx="2" cy="1" r="1.500" fill="#c9292b" stroke="none"/></g>
</g>

<!-- left panel -->
<rect x="0" y="191" width="837" height="792" fill="#f0f0f0"/>
<path d="M836.500,191V983M0,982.500H837" stroke="#8a8a8a"/>
<rect x="810" y="201" width="11" height="10" fill="#f5f5f5" stroke="#111"/><path d="M810,202h11" stroke="#111" stroke-width="2"/>
<rect x="0.500" y="229" width="773" height="18.500" fill="#fff" stroke="#7d7d7d"/>
<text x="4" y="243" font-size="13" style="font-family:'Liberation Mono'" fill="#222">file://</text>
<text x="786" y="243" font-size="12" fill="#333">工具</text><use href="#a" x="817" y="239"/>

<!-- doc -->
<rect x="0" y="255" width="812" height="705" fill="#fff"/>
<rect x="812" y="255" width="15" height="728" fill="#f0f0f0"/>
<rect x="812" y="296" width="15" height="613" fill="#c6c6c6"/>
<path d="M815,267L819,263 823,267M815,950L819,954 823,950" fill="none" stroke="#444" stroke-width="1.500"/>
<rect x="0" y="961" width="812" height="16" fill="#f0f0f0"/>
<rect x="0" y="961" width="749" height="16" fill="#c6c6c6"/>
<path d="M800,965L804,969 800,973" fill="none" stroke="#444" stroke-width="1.500"/>

<g clip-path="url(#docc)">
<path d="M0,278.500H44M0,293.500H44M0,308.500H44M33.500,278V308" stroke="#111"/>
<rect x="0" y="294" width="33" height="14" fill="#ffff20"/><rect x="34" y="294" width="14" height="14" fill="#ffff20"/>
<text x="7" y="291" font-size="10" fill="#333">B.</text>
<text x="4" y="306" font-size="10" fill="#e0a020">90.</text>
<path d="M0,322.500H812" stroke="#444" stroke-dasharray="1.500 2.500"/>

<g transform="translate(0,280) scale(.33333)">
<path d="M0,320C40,303 100,303 143,320" fill="none" stroke="#aaa" stroke-width="3"/>
<path d="M0,459H143" stroke="#555" stroke-width="2.500"/>
<text x="104" y="450" font-size="30" font-style="italic" fill="#555" style="font-family:'Liberation Serif'">15</text>
<path d="M0,585H143" stroke="#999" stroke-width="2" stroke-dasharray="6 4"/>
<path d="M58,558L140,636M58,558C80,535 110,515 143,507" fill="none" stroke="#333" stroke-width="2.500"/>
<path d="M60,556l14,-10 3,6z" fill="#111"/>
<path d="M0,632H130L143,640V1050L80,1058L0,1085Z" fill="url(#ht)"/>
<path d="M0,632H130L143,640" fill="none" stroke="#111" stroke-width="6"/>
<path d="M0,728H143" stroke="#24476e" stroke-width="2.500"/>
<rect x="110" y="728" width="33" height="318" fill="#a8d8fa"/>
<path d="M143,728H110V1046" fill="none" stroke="#0e1c40" stroke-width="6"/>
<path d="M110,798H143" stroke="#222" stroke-width="2"/>
<path d="M0,1044H143" stroke="#4a6fd0" stroke-width="3"/>
<text x="18" y="1008" font-size="42" font-style="italic" fill="#4a6fc0" style="font-family:'Liberation Serif'">E</text>
<path d="M0,1085C50,1062 100,1050 143,1048V1072C100,1125 40,1135 0,1130Z" fill="#7097d8"/>
<path d="M1285,565L1350,512" stroke="#e27070" stroke-width="2.500"/>
<path d="M1280,339H1330M1318,339V1180M1280,468H1330M1285,1113H1350M1280,1182H1330" stroke="#5a6ab0" stroke-width="2" fill="none"/>
<path d="M1318,339l-4,24h8zM1318,468l-4,-24h8zM1318,1182l-4,-24h8z" fill="#111"/>
<text transform="translate(1310,380) rotate(-90)" font-size="27" font-style="italic" fill="#555" style="font-family:'Liberation Serif'">12</text>
<text transform="translate(1310,835) rotate(-90)" font-size="30" font-style="italic" fill="#3a4f9a" style="font-family:'Liberation Serif'">D</text>
</g>

<!-- red notes -->
<g font-size="12.500" fill="#e8575b">
<text x="467" y="414" textLength="300" lengthAdjust="spacing" style="font-family:'Noto Serif CJK SC',serif">图中红色尺寸描述螺旋槽。三个螺旋槽均匀分布，槽截面</text>
<text x="475" y="427" textLength="280" lengthAdjust="spacing" style="font-family:'Noto Serif CJK SC',serif">为Φ5的圆，槽截面圆心位于壳体表面（即半圆槽）。</text>
<text x="513" y="440" textLength="202" lengthAdjust="spacing" style="font-family:'Noto Serif CJK SC',serif">端部为Φ10的圆孔，螺旋圈数为半圈。</text>
<text x="495" y="453" textLength="240" lengthAdjust="spacing" style="font-family:'Noto Serif CJK SC',serif">螺旋高度为B-20，或螺旋螺距为2x（B-20）。</text>
<text x="505" y="467" textLength="222" lengthAdjust="spacing" style="font-family:'Noto Serif CJK SC',serif">（两侧Φ10圆孔中心距离端面距离均为10）</text>
<text x="710" y="509" font-size="13" font-weight="700" style="font-family:'Liberation Serif'">K-K</text>
<text x="704" y="525" font-size="13" font-weight="700" style="font-family:'Liberation Serif'">(2:1)</text>
<text x="763" y="575" font-size="11.500" style="font-family:'Noto Serif CJK SC',serif">螺旋槽</text>
<text x="763" y="588" font-size="11.500" style="font-family:'Noto Serif CJK SC',serif">槽截面</text>
</g>

<!-- detail circle + KK in zoom6 coords -->
<g transform="translate(430,380) scale(.33333)">
<path d="M90,812H0M0,885H30M0,38H30M0,135H30" stroke="#667" stroke-width="2" fill="none"/>
<path d="M30,38V885" stroke="#5a6ab0" stroke-width="2"/>
<path d="M455,575C375,545 290,550 215,590 150,630 100,720 90,810 90,880 105,930 130,955H470V638H455Z" fill="#a9d3fb"/>
<path d="M215,598L158,642 310,755 365,720C330,680 280,630 215,598Z" fill="url(#blg)"/>
<path d="M158,642L320,762 348,790C340,830 355,875 395,875 425,870 430,815 425,775 415,730 395,715 370,722L310,745 290,720" fill="url(#blg)" stroke="none"/>
<path d="M158,642L320,762 348,790C340,830 355,875 395,875 425,870 430,815 425,775 415,730 395,712 368,725M310,748C330,725 350,725 368,725C340,680 280,630 210,598" fill="none" stroke="#0a0a0a" stroke-width="5"/>
<path d="M275,638H470V955H130M455,638V540" fill="none" stroke="#0a0a0a" stroke-width="6"/>
<circle cx="345" cy="815" r="255" fill="none" stroke="#7f7f7f" stroke-width="2.500"/>
<path d="M470,638H665M470,955H665" stroke="#999" stroke-width="2.500"/>
<path d="M660,638V955" stroke="#333" stroke-width="2.500"/>
<path d="M660,638l-5,24h10zM660,955l-5,-24h10z" fill="#111"/>
<text transform="translate(652,820) rotate(-90)" font-size="30" font-style="italic" fill="#333" style="font-family:'Liberation Serif'">20</text>
<path d="M415,535H510M455,540L465,495H520" fill="none" stroke="#333" stroke-width="2.500"/>
<path d="M475,535V610" stroke="#777" stroke-width="2"/>
<path d="M455,535l-24,-5v10zM475,535l24,-5v10z" fill="#111"/>
<text x="493" y="492" font-size="30" font-style="italic" fill="#333" style="font-family:'Liberation Serif'">1</text>
<!-- K-K -->
<path d="M885,470C805,478 750,540 750,605 752,630 760,645 772,655L790,632 870,505Z" fill="#6f96d5"/>
<path d="M885,470L998,495 965,555 870,505Z" fill="#5f87c9"/>
<path d="M772,655L790,632 890,690 845,750C810,730 790,690 772,655Z" fill="#5f87c9"/>
<path d="M870,505L965,555 945,585C905,590 870,625 890,660L895,690 790,632Z" fill="url(#kk)"/>
<path d="M905,478L890,515M935,482L910,530M965,488L935,545M995,495L965,550M790,650L780,660M815,655L800,690M840,670L825,715M868,690L850,735" stroke="#1f2f60" stroke-width="3"/>
<path d="M885,470L870,505 790,632 772,655M885,470L998,495 965,555 870,505M790,632L892,690 845,750" fill="none" stroke="#0a0a0a" stroke-width="5.500"/>
<path d="M885,470C805,478 750,540 750,605 752,630 760,645 772,655 790,700 815,735 845,745" fill="none" stroke="#0a0a0a" stroke-width="2.500"/>
<path d="M965,555L945,585A40,40 0 0 0 892,660L892,690" fill="#fff" stroke="#0a0a0a" stroke-width="5"/>
<circle cx="922" cy="622" r="38" fill="#fff" fill-opacity=".55" stroke="#e27070" stroke-width="2.500"/>
<path d="M880,560L985,735M950,618L990,590" stroke="#e27070" stroke-width="2.500"/>
<path d="M885,565l8,20 6,-10z" fill="#e05050"/>
<text transform="translate(968,695) rotate(35)" font-size="30" fill="#e27070" style="font-family:'Liberation Serif'">Φ5</text>
</g>

<!-- ring below submenu -->
<g>
<circle cx="287" cy="840" r="108" fill="#d5f1fb" stroke="#111" stroke-width="1.800"/>
<circle cx="287" cy="840" r="92" fill="#d5f1fb" stroke="#111" stroke-width="1.400"/>
<circle cx="287" cy="840" r="58" fill="#fff" stroke="#111" stroke-width="1.400"/>
<circle cx="287" cy="840" r="50" fill="#fff" stroke="#111" stroke-width="1.400"/>
<circle cx="287" cy="840" r="67" fill="none" stroke="#d8a0a0" stroke-dasharray="14 4 2 4"/>
<path d="M287,840V895" stroke="#e0a0a0" stroke-dasharray="10 3 2 3"/>
<circle cx="287" cy="906" r="7" fill="#c9a0b0" stroke="#111" stroke-width="2.500"/><circle cx="287" cy="906" r="2.500" fill="#eee"/>
<path d="M397,857H428M418,857v-6" stroke="#7a8ac0" fill="none"/>
</g>

<!-- blue model in zoom7 coords -->
<g transform="translate(430,720) scale(.33333)">
<path d="M327,460V735H900V470Z" fill="url(#bl)"/>
<path d="M327,460V735M900,470V735" stroke="#101030" stroke-width="5"/>
<path d="M385,530C440,600 520,680 640,735L720,735C580,690 480,630 430,570" fill="#d8ecff" stroke="#112" stroke-width="3"/>
<ellipse cx="412" cy="537" rx="24" ry="32" transform="rotate(-30 412 537)" fill="#cfe6ff" stroke="#334" stroke-width="2"/>
<path d="M882,490a6,14 0 1 0 .1,0" fill="#fff" stroke="#111" stroke-width="3"/>
<ellipse cx="612" cy="395" rx="334" ry="155" fill="#a3cdf8" stroke="#0a0a2a" stroke-width="5"/>
<ellipse cx="612" cy="362" rx="334" ry="155" fill="#bfe3ff" stroke="#0a0a2a" stroke-width="4"/>
<ellipse cx="612" cy="335" rx="334" ry="155" fill="#abd8fd" stroke="#0a0a2a" stroke-width="4"/>
<path d="M327,260V325C327,420 470,490 612,490 755,490 897,420 897,325V260Z" fill="url(#bl)" stroke="#0a0a2a" stroke-width="4"/>
<ellipse cx="612" cy="260" rx="285" ry="165" fill="#b9e0ff" stroke="#0a0a2a" stroke-width="5"/>
<ellipse cx="470" cy="178" rx="20" ry="11" fill="#b9e0ff" stroke="#112" stroke-width="3.500"/><ellipse cx="755" cy="178" rx="20" ry="11" fill="#b9e0ff" stroke="#112" stroke-width="3.500"/><ellipse cx="470" cy="343" rx="20" ry="11" fill="#b9e0ff" stroke="#112" stroke-width="3.500"/>
<path d="M660,345C500,350 445,300 445,250 445,190 520,150 612,150 700,150 770,190 778,255L762,295 862,335 865,368 750,435 745,400 650,340Z" fill="#9fcbf8" stroke="#0a0a2a" stroke-width="4"/>
<path d="M650,335C510,340 465,295 465,255 465,200 530,165 612,165 690,165 755,205 760,260V300L815,345 750,395Z" fill="url(#bl)" stroke="#0a0a2a" stroke-width="3"/>
<path d="M470,235C520,190 680,185 750,235" fill="none" stroke="#0a0a2a" stroke-width="3"/>
<circle cx="555" cy="292" r="39" fill="#86aee8"/><ellipse cx="545" cy="284" rx="28" ry="18" transform="rotate(-25 545 284)" fill="#fff" stroke="#223" stroke-width="2"/>
<path d="M762,295L862,335 862,370 815,345Z" fill="#7fa8e8" stroke="#0a0a2a" stroke-width="3"/>
<path d="M750,400L862,362V372L750,437Z" fill="#c7e6ff" stroke="#0a0a2a" stroke-width="3"/>
</g>
</g>

<!-- viewport -->
<rect x="837" y="191" width="820" height="792" fill="url(#vp)"/>
<g transform="translate(930,240) scale(.33333,.35714)">
<path d="M275,300L172,1130 142,1395C200,1450 500,1515 1000,1520 1090,1520 1125,1510 1128,1500L1155,1245 1242,400Z" fill="url(#org)"/>
<path d="M172,1130C176,1152 240,1170 600,1252 900,1280 1120,1270 1156,1240" fill="none" stroke="#f9b13a" stroke-width="7"/>
<path d="M172,1130C180,1158 240,1175 600,1258 900,1285 1120,1278 1156,1245" fill="none" stroke="#3a2a08" stroke-width="2.500"/>
<path d="M358,450C450,590 620,720 800,840 960,950 1150,1100 1150,1210" fill="none" stroke="#e8389a" stroke-width="4.500"/>
<path d="M648,1285C662,1330 640,1420 636,1420 628,1370 635,1320 648,1285Z" fill="#96a4d0"/>
<path d="M540,1408L622,1432 560,1428Z" fill="#9ac8a0"/><path d="M650,1440L770,1438 650,1444Z" fill="#f0b0b0"/>
<text x="600" y="1280" font-size="36" fill="#8488b0">ZC</text>
<text x="540" y="1400" font-size="36" fill="#8eb040">YC</text>
<text x="730" y="1478" font-size="36" fill="#d65a28">XC</text>
</g>
<!-- top of part, crop coords -->
<g transform="translate(990,255) scale(.33333)">
<path d="M30,215V250C60,290 90,300 300,335 600,385 900,415 1050,405 1100,398 1135,388 1145,375L1155,305 1000,250H100Z" fill="url(#org)"/>
<path d="M30,250C60,290 90,300 300,335 600,385 900,415 1050,405 1100,398 1135,388 1145,375" fill="none" stroke="#3a2a08" stroke-width="3"/>
<path d="M30,215C30,185 60,160 125,150L1080,260C1120,270 1155,290 1153,310 1140,330 1090,345 1000,345 700,335 300,290 100,260 60,245 35,230 30,215Z" fill="#fbab12"/>
<path d="M30,215C35,230 60,245 100,260 300,290 700,335 1000,345 1090,345 1140,330 1153,310" fill="none" stroke="#4a3408" stroke-width="2.500"/>
<path d="M130,65L115,190C170,235 400,285 700,315 850,330 1000,335 1070,305L1087,170 800,60Z" fill="url(#org)"/>
<path d="M115,190C170,235 400,285 700,315 850,330 1000,335 1070,305" fill="none" stroke="#4a3408" stroke-width="2"/>
<path d="M130,65C150,40 250,25 340,25 600,35 900,80 1040,125 1075,140 1090,160 1087,175 1060,190 1000,195 975,195L840,180 760,192C600,165 300,130 130,85Z" fill="#fba80e"/>
<path d="M130,85C300,130 600,165 755,192" fill="none" stroke="#5a4008" stroke-width="2"/>
<path d="M975,195C1000,195 1060,190 1087,175" fill="none" stroke="#6a4a08" stroke-width="1.500"/>
<ellipse cx="328" cy="105" rx="30" ry="7" fill="none" stroke="#7a5510" stroke-width="2"/>
<ellipse cx="908" cy="117" rx="16" ry="5" fill="none" stroke="#7a5510" stroke-width="2"/>
<path d="M335,60C345,42 420,35 500,38 620,45 800,70 870,100 900,115 890,135 885,150L862,158 840,130 700,120 420,90Z" fill="#f5a512" stroke="#5a4008" stroke-width="1.500"/>
<path d="M335,60V75C400,110 520,135 640,152V125C540,115 400,95 335,60Z" fill="#e08c02" stroke="#4a3408" stroke-width="2"/>
<path d="M365,55C400,36 560,40 720,60 800,75 860,95 862,122L845,125 835,178C780,155 700,140 640,128 530,110 410,90 365,55Z" fill="url(#hg)"/>
<path d="M640,132L835,178 838,205 918,238 920,242 755,242 760,192 640,152Z" fill="#ef9803"/>
<path d="M640,132L835,178M760,192V245" stroke="#4a3408" stroke-width="2" fill="none"/>
<path d="M755,245L920,242 970,260 760,260Z" fill="#fdb418" stroke="#4a3408" stroke-width="2"/>
<path d="M845,125L840,180 975,195 970,260 838,205Z" fill="#e98f02" stroke="#4a3408" stroke-width="2"/>
<path d="M845,125H862L885,130 880,150 862,158Z" fill="#f5a512" stroke="#4a3408" stroke-width="1.500"/>
</g>
<!-- triad -->
<g>
<path d="M889,888L907,890 923,893 921,912 905,925 886,917Z" fill="#d5d5d5" stroke="#bbb"/>
<path d="M889,888L894,882 923,893" fill="#e8e8e8" stroke="#bbb"/>
<path d="M901,917L905,875" stroke="#1a3fa0" stroke-width="2.500"/><path d="M905,870L902,881 908,881Z" fill="#1a3fa0"/>
<path d="M901,917L878,908" stroke="#2f8f4a" stroke-width="2.500"/><path d="M874,906L883,906 880,912Z" fill="#2f8f4a"/>
<path d="M901,919L934,919" stroke="#c03030" stroke-width="2.500"/><path d="M938,919L930,915V923Z" fill="#c03030"/>
<circle cx="901" cy="919" r="4" fill="#ddd"/>
<text x="902" y="877" font-size="11" fill="#6a7aa8">Z</text>
<text x="870" y="914" font-size="11" fill="#6a8a6a">Y</text>
<text x="936" y="925" font-size="11" fill="#a06a6a">X</text>
</g>
<circle cx="1657" cy="956.500" r="23.500" fill="url(#tm)" stroke="#e5f4ff" stroke-width="2"/>
<text x="1638" y="962" font-size="15" fill="#e8f6ff">04:</text>

<!-- bottom bar -->
<rect y="983" width="1657" height="35" fill="#e4e4e4"/>
<rect y="985" x="0" width="1347" height="33" fill="url(#tb)"/>
<path d="M1347.500,985V1018M0,1018H1657" stroke="#b5b5b5"/>
<rect y="1019" width="1657" height="17" fill="#dadada"/>
<path d="M770.500,1019V1036" stroke="#bcbcbc"/>
<text x="-3" y="1032" font-size="12" font-weight="700" fill="#222">或者双击某一对象</text>

<g>
<g fill="none" stroke="#a3232b" stroke-width="1.200">
<path d="M10,994L30,1004M20,990V1012" stroke-dasharray="3 2"/><circle cx="11" cy="999" r="1.500" fill="#a3232b"/>
<path d="M42,1006L54,996"/><circle cx="56" cy="999" r="5" stroke-dasharray="2 1.500"/><circle cx="42" cy="1006" r="1.500" fill="#a3232b"/>
<path d="M72,1008L88,996"/><circle cx="77" cy="1006" r="5" stroke-dasharray="2 1.500"/><circle cx="88" cy="1000" r="4" stroke-dasharray="2 1.500"/>
<path d="M103,1000C108,993 122,992 124,996 120,1003 110,1004 110,1006 112,1010 104,1012 103,1006"/>
<path d="M133,1012L142,998 147,1005 154,1000M143,993L150,990" stroke-dasharray="3 1.500"/>
<rect x="165" y="990" width="18" height="22" fill="#9ec2ea" stroke="#1e4a9a"/><path d="M174,986V1016M163,996H186M163,1006H186" stroke="#1e4a9a"/>
</g>
<use href="#sp" x="194" y="1001"/>
<g fill="none" stroke="#a3232b" stroke-width="1.400">
<path d="M203,994C212,994 218,1002 219,1012" stroke="#333"/><circle cx="203" cy="994" r="1.500" fill="#a3232b"/><circle cx="219" cy="1012" r="1.500" fill="#a3232b"/>
<path d="M234,994C243,996 249,1002 251,1012"/><path d="M240,990L238,1000" stroke="#333"/>
<path d="M265,994H284C287,1000 287,1006 284,1011H265" stroke="#333" stroke-dasharray="3 1.500"/><path d="M281,990V1016" stroke-dasharray="2 2"/>
<path d="M296,994H316M314,990V1014" stroke-dasharray="2 1.500"/><path d="M302,998L312,1002" stroke="#333"/>
</g>
<use href="#sp" x="324" y="1001"/>
<g fill="none" stroke="#5a2050" stroke-width="1.300">
<circle cx="342" cy="1001" r="9"/><circle cx="372" cy="1002" r="9"/><circle cx="403" cy="1002" r="9"/><circle cx="435" cy="1002" r="9"/><circle cx="472" cy="1001" r="9"/>
<path d="M396,992H410M412,995V1010" stroke="#a3232b" stroke-dasharray="2 1.500"/><path d="M430,1006L440,995M442,990L445,993" stroke="#a3232b"/><path d="M468,1005L476,997" stroke="#a3232b" stroke-width="2"/>
</g>
<circle cx="342" cy="1001" r="1" fill="#a3232b"/><circle cx="372" cy="1002" r="1" fill="#a3232b"/><circle cx="403" cy="1002" r="1" fill="#a3232b"/>
<use href="#a" x="493" y="1007"/><use href="#sp" x="502" y="1001"/><use href="#gp" x="507" y="1001"/>
<g transform="translate(512,989)"><g fill="#f0b45c"><rect width="6" height="6"/><rect x="9" width="6" height="6"/><rect x="18" width="6" height="6"/></g><g fill="#9cc8e8"><rect y="9" width="6" height="6"/><rect x="9" y="9" width="6" height="6"/><rect x="18" y="9" width="6" height="6"/><rect y="18" width="6" height="6"/><rect x="9" y="18" width="6" height="6"/><rect x="18" y="18" width="6" height="6"/></g></g>
<g transform="translate(544,989)"><g fill="#f0b45c"><rect width="6" height="6"/><rect x="9" width="6" height="6"/><rect x="18" width="6" height="6"/></g><g fill="#9cc8e8"><rect y="9" width="6" height="6"/><rect y="18" width="6" height="6"/></g><path d="M6,16H26M16,7V26" stroke="#1e6fb8" stroke-width="1.800"/></g>
<use href="#sp" x="575" y="1001"/>
<g stroke-width="1.200"><rect x="582" y="989" width="8" height="24" fill="#cde8fa" stroke="#2a86c0"/><path d="M595,989H605V1013H596V1007H600V995H595Z" fill="#fcd45a" stroke="#b77d18"/>
<path d="M613,990H611V1012H614M631,990H634V1012H631" fill="none" stroke="#2a86c0"/><path d="M615,993L622,1002V1010M629,993L622,1002" fill="none" stroke="#c57f20" stroke-width="3"/>
<path d="M655,990L660,993 666,991 667,997 668,1003 665,1008 659,1009 654,1012 650,1008 644,1006 644,999 646,994 651,993Z" fill="#fcd45a" stroke="#b77d18"/><circle cx="655" cy="1001" r="6.500" fill="#bce2f5" stroke="#2a86c0"/></g>
<use href="#sp" x="674" y="1001"/>
<g stroke-width="1.200"><path d="M680,990H704V994H699V1009H704V1012H680V1009H685V994H680Z" fill="#fbe38a" stroke="#2a86c0"/><rect x="688" y="1002" width="8" height="7" fill="#bce2f5" stroke="#2a86c0"/>
<path d="M712,990H734V994H730V1009H734V1012H712V1009H716V994H712Z" fill="#cde8fa" stroke="#2a86c0"/><path d="M716,997H730M716,1001H730M716,1005H730" stroke="#2a86c0"/>
<path d="M749,1001V993C749,989 757,989 757,993V1001H759V1012H747V1001Z" fill="#fcd45a" stroke="#b77d18"/><path d="M747,1005H759" stroke="#b77d18"/>
<path d="M777,990H793V998H788V1001H782V998H777Z" fill="#fcd45a" stroke="#b77d18"/><rect x="782" y="1001" width="6" height="11" fill="#cde8fa" stroke="#2a86c0"/>
<circle cx="816" cy="1001" r="11.500" fill="#cde8fa" stroke="#2a86c0"/><path d="M816,990A11,11 0 0 1 827,1001H816ZM816,1012A11,11 0 0 1 805,1001H816Z" fill="#fcd45a"/><path d="M805,1001H827M816,990V1012" stroke="#2a86c0"/>
<path d="M841,1012V1002L846,990H851V998L855,1002V1012Z" fill="#259a7c" stroke="#111"/><path d="M838,998H858" stroke="#d14b48"/>
<path d="M866,990H879V1000L876,1012H873V996H871V1012H869L866,1000Z" fill="#fcd45a" stroke="#b77d18"/><path d="M881,990H890V1000L887,1012H884L881,1000Z" fill="#fcd45a" stroke="#b77d18"/>
<path d="M898,991H921M898,1012H921M921,995L899,1000 921,1004 899,1008" fill="none" stroke="#2a86c0" stroke-width="1.400"/></g>
<path d="M933,990H947V1012H933Z" fill="#fcd45a" stroke="#b77d18"/><rect x="938" y="1003" width="5" height="9" fill="#e0eef8" stroke="#2a86c0"/>
<path d="M961,990H981V1012H961Z" fill="#cde8fa" stroke="#2a86c0"/><path d="M961,990H981V1000L976,1003V1012H966V1003L961,1000Z" fill="#fcd45a" stroke="#b77d18"/>
<rect x="999" y="990" width="6" height="22" fill="#fcd45a" stroke="#b77d18"/><rect x="1000" y="989" width="5" height="3" fill="#cde8fa" stroke="#2a86c0"/><rect x="999" y="1007" width="8" height="5" fill="#fcd45a" stroke="#b77d18"/>
<path d="M1033,990V1012M1030,990h6v4h-6z" stroke="#2a86c0" fill="#cde8fa"/><path d="M1033,1012l-2,-4h4z" fill="#2a86c0"/>
<rect x="1053" y="989" width="21" height="24" fill="#d0e8f8" stroke="#2a7ab0" stroke-width="1.400"/><g fill="none" stroke="#666"><circle cx="1057" cy="993" r="1.500"/><circle cx="1070" cy="993" r="1.500"/><circle cx="1057" cy="1009" r="1.500"/><circle cx="1070" cy="1009" r="1.500"/></g>
<use href="#sp" x="1084" y="1001"/>
<rect x="1096" y="990" width="10" height="23" rx="4" fill="#fcd45a" stroke="#b77d18"/>
<path d="M1123,990H1142V1012H1123Z" fill="#fcd45a" stroke="#b77d18"/><path d="M1128,990H1137V998H1136L1134,1012H1131L1128,998Z" fill="#cde8fa" stroke="#555"/>
<rect x="1155" y="990" width="17" height="23" rx="5" fill="#fcd45a" stroke="#b77d18"/><circle cx="1163" cy="996" r="2.500" fill="#cde8fa" stroke="#2a86c0"/><circle cx="1163" cy="1007" r="2.500" fill="#cde8fa" stroke="#2a86c0"/>
<rect x="1186" y="990" width="6" height="23" rx="3" fill="#fcd45a" stroke="#b77d18"/><path d="M1194,1000L1203,988" stroke="#2a86c0" stroke-width="2.500"/><rect x="1193" y="1003" width="6" height="9" fill="#cde8fa" stroke="#2a86c0"/>
<path d="M1213,997H1237V1006H1213Z" fill="#fcd45a" stroke="#b77d18"/><path d="M1217,1006V1013M1223,1006V1013" stroke="#555"/><rect x="1226" y="992" width="9" height="8" fill="#cde8fa" stroke="#2a86c0"/><rect x="1228" y="1000" width="4" height="6" fill="#cde8fa" stroke="#2a86c0"/>
<path d="M1249,990H1262V996H1257V1003H1262V1012H1249Z" fill="#fcd45a" stroke="#b77d18"/><circle cx="1255" cy="995" r="2.500" fill="#cde8fa" stroke="#2a86c0"/>
<rect x="1281" y="998" width="16" height="13" fill="#fcd45a" stroke="#b77d18"/><path d="M1276,993H1293" stroke="#2a86c0"/><circle cx="1281" cy="991" r="2.500" fill="#cde8fa" stroke="#2a86c0"/>
<circle cx="1317" cy="1001" r="11" fill="#d8ecf8" stroke="#2a7ab0" stroke-width="1.400"/><circle cx="1317" cy="1001" r="7.500" fill="none" stroke="#2a7ab0" stroke-dasharray="1 2"/><path d="M1317,1006V996M1314.500,998L1317,995 1319.500,998" stroke="#b0602a" fill="none"/>
<use href="#a" x="1339" y="1007"/>
</g>

<!-- IME -->
<rect x="1590" y="1019" width="67" height="17" fill="#fff"/>
<rect x="1565" y="1012" width="25" height="22" rx="5" fill="#e8642c" transform="rotate(-8 1577 1023)"/>
<text x="1569" y="1033" font-size="24" font-weight="700" fill="#fff">S</text>
<text x="1599" y="1033" font-size="14" font-weight="700" fill="#1e7ac0">中</text>
<text x="1624" y="1032" font-size="14" font-weight="700" fill="#1e7ac0">°,</text>
<circle cx="1651" cy="1027" r="8" fill="#1e7ac0"/><path d="M1646,1027h10" stroke="#fff" stroke-width="1.800"/>
</svg>

<!-- main menu -->
<div class="m" style="left:47px;top:52px;width:216px;height:885px"></div>
<div class="h" style="left:50px;top:283px;width:212px;height:30px"></div>
<div class="s" style="left:60px;top:178px;width:189px"></div>
<div class="s" style="left:60px;top:277px;width:189px"></div>
<div class="s" style="left:60px;top:346px;width:189px"></div>
<div class="s" style="left:60px;top:475px;width:189px"></div>
<div class="s" style="left:60px;top:604px;width:189px"></div>
<div class="s" style="left:60px;top:643px;width:189px"></div>
<div class="s" style="left:60px;top:682px;width:189px"></div>
<div class="s" style="left:60px;top:721px;width:189px"></div>
<div class="s" style="left:60px;top:760px;width:189px"></div>
<div class="s" style="left:60px;top:799px;width:189px"></div>
<div class="s" style="left:60px;top:838px;width:189px"></div>
<div class="i" style="left:85px;top:55px">草图(<u>H</u>)...</div>
<div class="i" style="left:85px;top:85px">在任务环境中绘制草图(<u>V</u>)...</div>
<div class="i" style="left:85px;top:115px">草图曲线(<u>S</u>)</div><div class="r" style="left:250px;top:126px"></div>
<div class="i" style="left:85px;top:145px">草图约束(<u>K</u>)</div><div class="r" style="left:250px;top:156px"></div>
<div class="i" style="left:85px;top:184px">基准/点(<u>D</u>)</div><div class="r" style="left:250px;top:195px"></div>
<div class="i" style="left:85px;top:214px">曲线(<u>C</u>)</div><div class="r" style="left:250px;top:225px"></div>
<div class="i" style="left:85px;top:244px">派生曲线(<u>U</u>)</div><div class="r" style="left:250px;top:255px"></div>
<div class="i" style="left:85px;top:283px;color:#e9eefa">设计特征(<u>E</u>)</div><div class="r" style="left:250px;top:294px"></div>
<div class="i" style="left:85px;top:313px">关联复制(<u>A</u>)</div><div class="r" style="left:250px;top:324px"></div>
<div class="i" style="left:85px;top:352px">组合(<u>B</u>)</div><div class="r" style="left:250px;top:363px"></div>
<div class="i" style="left:85px;top:382px">修剪(<u>T</u>)</div><div class="r" style="left:250px;top:393px"></div>
<div class="i" style="left:85px;top:412px">偏置/缩放(<u>O</u>)</div><div class="r" style="left:250px;top:423px"></div>
<div class="i" style="left:85px;top:442px">细节特征(<u>L</u>)</div><div class="r" style="left:250px;top:453px"></div>
<div class="i" style="left:85px;top:481px">曲面(<u>R</u>)</div><div class="r" style="left:250px;top:492px"></div>
<div class="i" style="left:85px;top:511px">网格曲面(<u>M</u>)</div><div class="r" style="left:250px;top:522px"></div>
<div class="i" style="left:85px;top:541px">扫掠(<u>W</u>)</div><div class="r" style="left:250px;top:552px"></div>
<div class="i" style="left:85px;top:571px">弯边曲面(<u>G</u>)</div><div class="r" style="left:250px;top:582px"></div>
<div class="i" style="left:85px;top:609px">CAM 数据准备(<u>P</u>)</div><div class="r" style="left:250px;top:620px"></div>
<div class="i" style="left:85px;top:648px">小平面建模(<u>C</u>)</div><div class="r" style="left:250px;top:659px"></div>
<div class="i" style="left:85px;top:687px">NX 创意塑型(<u>Z</u>)...</div>
<div class="i" style="left:85px;top:726px">同步建模(<u>Y</u>)</div><div class="r" style="left:250px;top:737px"></div>
<div class="i" style="left:85px;top:765px">航空设计(<u>A</u>)</div><div class="r" style="left:250px;top:776px"></div>
<div class="i" style="left:85px;top:805px">表(<u>B</u>)</div><div class="r" style="left:250px;top:816px"></div>
<div class="i" style="left:85px;top:843px">焊接助理(<u>N</u>)</div><div class="r" style="left:250px;top:854px"></div>
<div class="i" style="left:85px;top:873px">结构焊接(<u>I</u>)</div><div class="r" style="left:250px;top:884px"></div>
<div class="i" style="left:85px;top:903px"><u>B</u>IW 定位器</div><div class="r" style="left:250px;top:914px"></div>

<!-- submenu -->
<div class="m" style="left:261px;top:284px;width:168px;height:572px"></div>
<div class="h" style="left:263px;top:286px;width:163px;height:30px"></div>
<div class="s" style="left:273px;top:469px;width:142px"></div>
<div class="s" style="left:273px;top:748px;width:142px"></div>
<div class="s" style="left:273px;top:817px;width:142px"></div>
<div class="i" style="left:298px;top:286px;color:#e9eefa">拉伸(<u>E</u>)...</div>
<div class="i" style="left:400px;top:286px;color:#e9eefa;font-size:13px">X</div>
<div class="i" style="left:298px;top:316px">旋转(<u>R</u>)...</div>
<div class="i" style="left:298px;top:346px">长方体(<u>K</u>)...</div>
<div class="i" style="left:298px;top:376px">圆柱体(<u>C</u>)...</div>
<div class="i" style="left:298px;top:406px">圆锥(<u>O</u>)...</div>
<div class="i" style="left:298px;top:436px">球(<u>S</u>)...</div>
<div class="i" style="left:298px;top:475px">孔(<u>H</u>)...</div>
<div class="i" style="left:298px;top:505px">凸台(<u>B</u>)...</div>
<div class="i" style="left:298px;top:535px">腔(<u>P</u>)...</div>
<div class="i" style="left:298px;top:565px">垫块(<u>A</u>)...</div>
<div class="i" style="left:298px;top:595px">凸起(<u>M</u>)...</div>
<div class="i" style="left:298px;top:625px">偏置凸起(<u>F</u>)...</div>
<div class="i" style="left:298px;top:654px">键槽(<u>L</u>)...</div>
<div class="i" style="left:298px;top:685px">槽(<u>G</u>)...</div>
<div class="i" style="left:298px;top:715px">筋板(<u>I</u>)...</div>
<div class="i" style="left:298px;top:754px">三角形加强筋(<u>D</u>)...</div>
<div class="i" style="left:298px;top:784px">螺纹(<u>T</u>)...</div>
<div class="i" style="left:298px;top:823px">用户定义(<u>U</u>)...</div>

<!-- menu icons -->
<svg width="1657" height="1036" viewBox="0 0 1657 1036" style="pointer-events:none">
<defs><linearGradient id="sph" x1="0" y1="0" x2="1" y2="1"><stop offset="0" stop-color="#fdf5a0"/><stop offset="1" stop-color="#c0a010"/></linearGradient>
<linearGradient id="cyl" x1="0" y1="0" x2="1" y2="0"><stop offset="0" stop-color="#9cbcf0"/><stop offset="1" stop-color="#3b6bc8"/></linearGradient>
<g id="c2"><path d="M-11,-6L-1,-11 11,-7 1,-2Z" fill="#c3d8f5" stroke="#2f5fb0" stroke-width=".8"/><path d="M-11,-6L1,-2V11L-11,7Z" fill="#7ea9ea" stroke="#2f5fb0" stroke-width=".8"/><path d="M1,-2L11,-7V6L1,11Z" fill="#3263c0" stroke="#2f5fb0" stroke-width=".8"/></g></defs>
<g transform="translate(64,69)"><path d="M-10,-8L6,-5 9,9 -6,12Z" fill="#efefef" stroke="#222"/><rect x="-7" y="-3" width="5" height="5" fill="none" stroke="#222"/><rect x="-5" y="4" width="8" height="5" fill="none" stroke="#222"/><path d="M8,-12l1.500,4 4,1-4,1-1.500,4-1.500-4-4-1 4-1z" fill="#f5d020"/></g>
<g transform="translate(64,100)"><rect x="-10" y="-11" width="8" height="9" fill="none" stroke="#222" stroke-width="1.200"/><rect x="-10" y="1" width="6" height="10" fill="none" stroke="#222" stroke-width="1.200"/><rect x="-3" y="1" width="12" height="10" fill="none" stroke="#222" stroke-width="1.200"/><path d="M1,-3L9,-11 11,-9 3,-1Z" fill="#eab24a" stroke="#8a5a10"/></g>
<g transform="translate(65,702)" fill="none" stroke="#3a62c0"><path d="M-10,-6L0,-11 10,-6V6L0,11 -10,6Z" fill="#b5cdf2"/><path d="M-10,-6L0,-1 10,-6M0,-1V11"/><rect x="-5" y="-5" width="10" height="10" stroke="#6f94e0" fill="#dbe8fb" fill-opacity=".5"/></g>
<g transform="translate(278,301)"><path d="M-13,-7C-10,-10 8,-12 10,-8L11,7C6,10 -8,9 -12,11Z" fill="#f2a02a" stroke="#7a3a10"/><path d="M-8,-8V9M-2,-10V9M4,-10V8" stroke="#5a3010" stroke-width=".8"/><path d="M-6,-9L-2,-9 -2,8 -6,8ZM0,-10H4V8H0Z" fill="#fbe4a0"/><path d="M-13,11C-6,8 6,9 11,7" stroke="#2a50a0" fill="none" stroke-width="1.200"/></g>
<g transform="translate(278,331)"><path d="M-10,-9C-6,-12 6,-12 10,-9V2C6,4 5,6 4,10H-4C-3,5 -6,2 -10,2Z" fill="#2a6fc5" stroke="#7a3a10"/><path d="M1,-11C6,-11 10,-10 10,-8V2C7,3 5,6 4,10H1Z" fill="#f0a030"/><path d="M0,-14V14" stroke="#b9301e" stroke-dasharray="3 1"/></g>
<use href="#c2" x="278" y="361"/>
<g transform="translate(278,391)"><rect x="-9" y="-8" width="18" height="18" fill="url(#cyl)"/><ellipse cy="-8" rx="9" ry="3.500" fill="#c7dbf6" stroke="#2f5fb0"/><path d="M-9,-8V10A9,3.500 0 0 0 9,10V-8" fill="none" stroke="#2f5fb0"/></g>
<g transform="translate(278,421)"><path d="M0,-11L10,7A10,3.500 0 0 1 -10,7Z" fill="url(#cyl)" stroke="#2f5fb0"/></g>
<circle cx="278" cy="451" r="9.500" fill="url(#sph)" stroke="#9a8414"/>
<g transform="translate(278,490)"><use href="#c2"/><circle cx="-4" cy="2" r="3.500" fill="#ea6a20" stroke="#7a3a10"/></g>
<g transform="translate(278,520)"><use href="#c2"/><circle cx="-6" cy="3" r="4.500" fill="#f5c860" stroke="#7a3a10"/><circle cx="-9" cy="5" r="3" fill="#f0a030" stroke="#7a3a10"/></g>
<g transform="translate(278,550)"><use href="#c2"/><rect x="-8" y="-1" width="7" height="8" fill="#ea6a20" stroke="#7a3a10"/></g>
<g transform="translate(278,580)"><use href="#c2"/><rect x="-10" y="-2" width="8" height="8" fill="#f5a030" stroke="#7a3a10"/></g>
<g transform="translate(278,610)"><path d="M-13,0L-2,-8 12,-3 11,3 -1,10Z" fill="#dfe6f2" stroke="#6f85a8"/><ellipse cy="0" rx="7" ry="4" fill="#f4a520" stroke="#9a6010"/></g>
<g transform="translate(278,640)"><path d="M-13,2L-2,-9 11,-2 4,11Z" fill="#dfe6f2" stroke="#6f85a8"/><path d="M-5,2L3,-6 7,-3 -1,6Z" fill="#e8b040" stroke="#7a3a10"/><circle cx="2" cy="3" r="2" fill="#3a6fc0"/></g>
<g transform="translate(278,669)"><use href="#c2"/><rect x="-8" y="2" width="7" height="3" fill="#ea6a20" stroke="#7a3a10"/></g>
<g transform="translate(278,700)"><rect x="-9" y="-9" width="18" height="19" fill="url(#cyl)"/><ellipse cy="-9" rx="9" ry="3.500" fill="#c7dbf6"/><rect x="-7" y="-4" width="14" height="5" fill="#e9b050"/><ellipse cy="10" rx="9" ry="3" fill="#3263c0"/></g>
<g transform="translate(278,730)"><path d="M-12,0L0,-9 12,0 0,9Z" fill="#8fb0e6" stroke="#2f5fb0"/><path d="M-7,0L0,-5 7,0 0,5Z" fill="#f0a848"/><path d="M-12,0V4L0,13 12,4V0L0,9Z" fill="#5f87d0" stroke="#2f5fb0"/><path d="M-4,-1L0,3 5,-2" stroke="#b0501a" fill="none" stroke-width="1.500"/></g>
<g transform="translate(278,769)"><path d="M-12,10L-3,-10 11,-10 11,7Z" fill="#b8cef0" stroke="#3a62b0"/><path d="M-6,9L1,-6 3,9Z" fill="#f0a030" stroke="#7a3a10"/><path d="M-12,10L11,7" stroke="#3a62b0"/></g>
<g transform="translate(278,799)"><rect x="-6" y="-11" width="12" height="24" rx="2" fill="#d8d8d8" stroke="#777"/><path d="M-7,-6H7M-7,-2H7M-7,2H7M-7,6H7" stroke="#777"/></g>
<g transform="translate(278,838)"><path d="M-10,-2L0,-10 8,-3V10H-8V-2Z" fill="#fbd968" stroke="#8a6a20"/><path d="M-8,0L2,0V10H-8Z" fill="#fdeaa0" stroke="#8a6a20"/><path d="M3,-7L9,-13 12,-10 7,-4Z" fill="#7a62c0"/></g>
<path d="M311,305V322L315,318 318,325 321,323 318,317 323,316Z" fill="#fff" stroke="#111"/>
</svg>
</body></html>
